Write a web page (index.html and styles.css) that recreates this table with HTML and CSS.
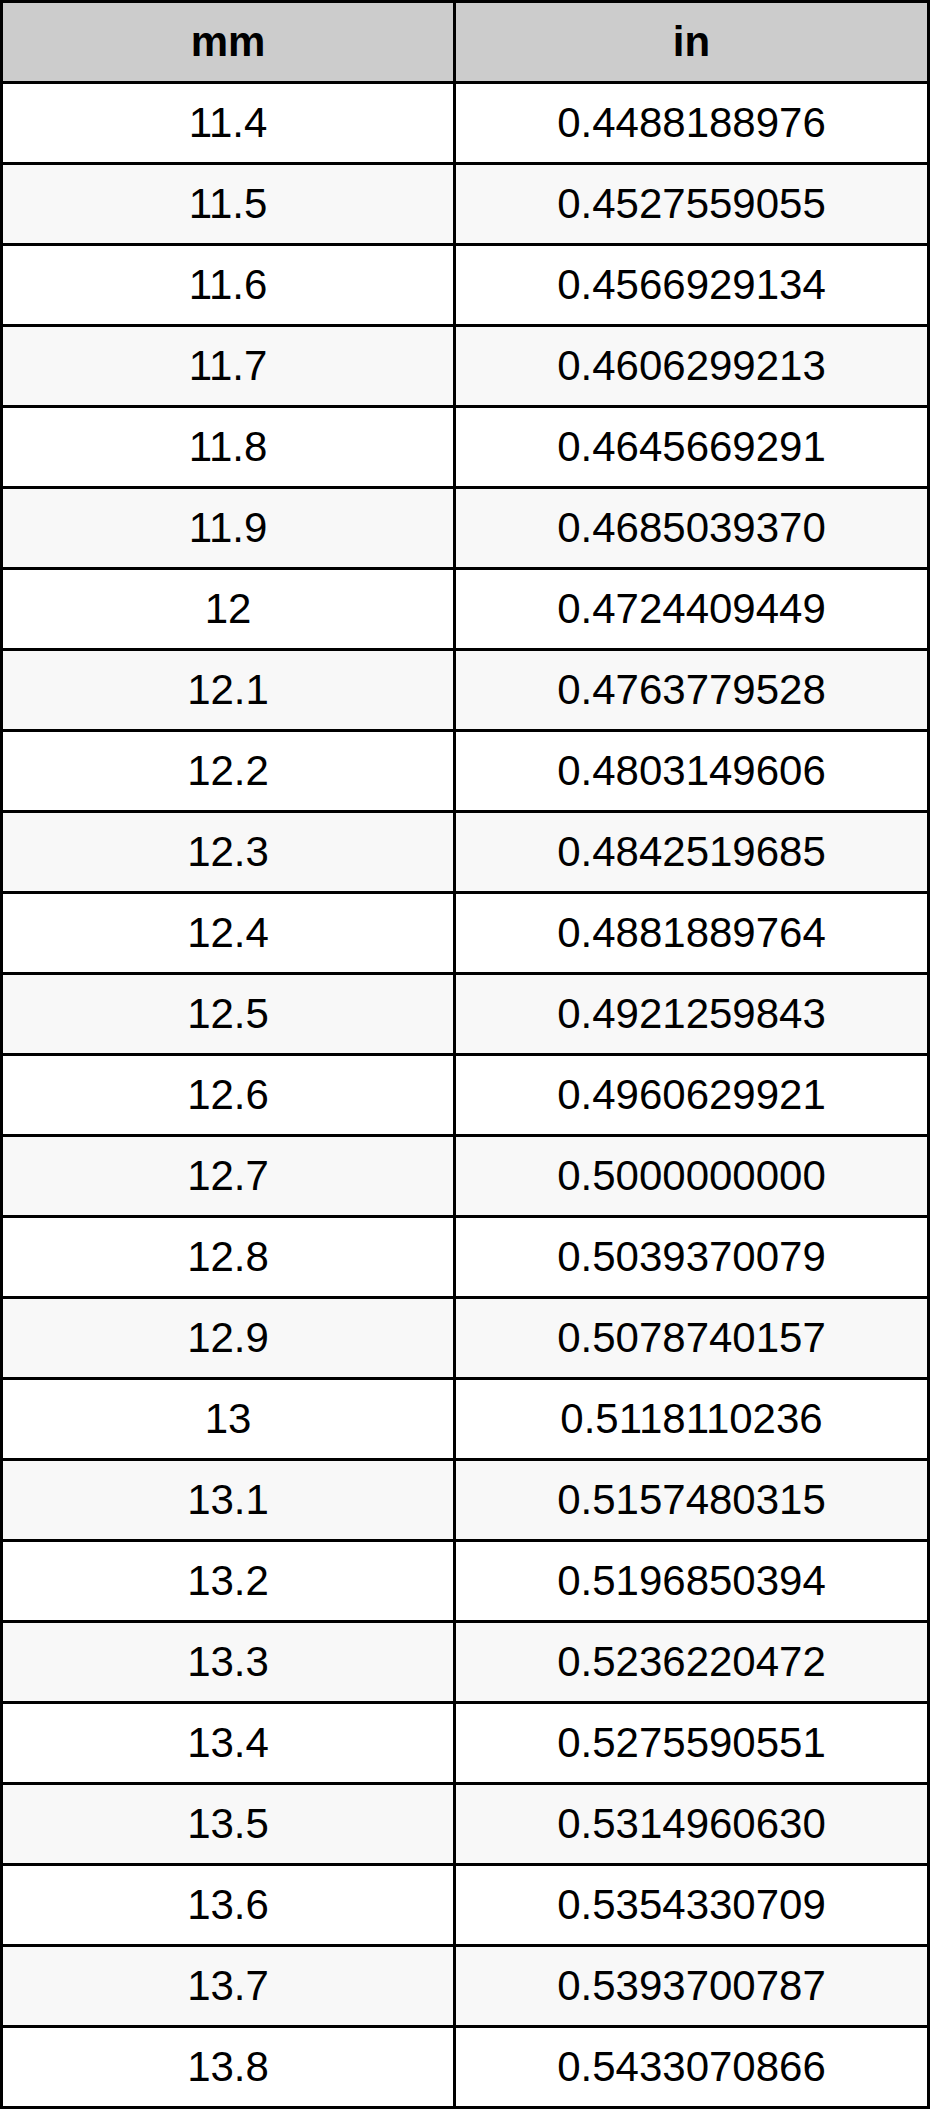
FILE: index.html
```html
<!DOCTYPE html>
<html lang="en">
<head>
<meta charset="utf-8">
<title>mm to in</title>
<link rel="stylesheet" href="styles.css">
</head>
<body>
<table class="conv">
<thead>
<tr><th class="c1">mm</th><th class="c2">in</th></tr>
</thead>
<tbody>
<tr><td>11.4</td><td>0.4488188976</td></tr>
<tr><td>11.5</td><td>0.4527559055</td></tr>
<tr><td>11.6</td><td>0.4566929134</td></tr>
<tr><td>11.7</td><td>0.4606299213</td></tr>
<tr><td>11.8</td><td>0.4645669291</td></tr>
<tr><td>11.9</td><td>0.4685039370</td></tr>
<tr><td>12</td><td>0.4724409449</td></tr>
<tr><td>12.1</td><td>0.4763779528</td></tr>
<tr><td>12.2</td><td>0.4803149606</td></tr>
<tr><td>12.3</td><td>0.4842519685</td></tr>
<tr><td>12.4</td><td>0.4881889764</td></tr>
<tr><td>12.5</td><td>0.4921259843</td></tr>
<tr><td>12.6</td><td>0.4960629921</td></tr>
<tr><td>12.7</td><td>0.5000000000</td></tr>
<tr><td>12.8</td><td>0.5039370079</td></tr>
<tr><td>12.9</td><td>0.5078740157</td></tr>
<tr><td>13</td><td>0.5118110236</td></tr>
<tr><td>13.1</td><td>0.5157480315</td></tr>
<tr><td>13.2</td><td>0.5196850394</td></tr>
<tr><td>13.3</td><td>0.5236220472</td></tr>
<tr><td>13.4</td><td>0.5275590551</td></tr>
<tr><td>13.5</td><td>0.5314960630</td></tr>
<tr><td>13.6</td><td>0.5354330709</td></tr>
<tr><td>13.7</td><td>0.5393700787</td></tr>
<tr><td>13.8</td><td>0.5433070866</td></tr>
</tbody>
</table>
</body>
</html>
```
FILE: styles.css
```css
html, body {
  margin: 0;
  padding: 0;
  background: #ffffff;
}

.conv {
  width: 930px;
  table-layout: fixed;
  border-collapse: separate;
  border-spacing: 0;
  border-top: 3px solid #000;
  border-left: 3px solid #000;
  font-family: "Liberation Sans", Arial, sans-serif;
  font-size: 42px;
  color: #000;
}

.conv th,
.conv td {
  padding: 0;
  line-height: 78px;
  text-align: center;
  vertical-align: middle;
  border-right: 3px solid #000;
  border-bottom: 3px solid #000;
  white-space: nowrap;
}

.conv th {
  background: #cccccc;
  font-weight: bold;
}

.conv .c1 {
  width: 450px;
}

.conv tbody tr:nth-child(even) td {
  background: #f8f8f8;
}
```
